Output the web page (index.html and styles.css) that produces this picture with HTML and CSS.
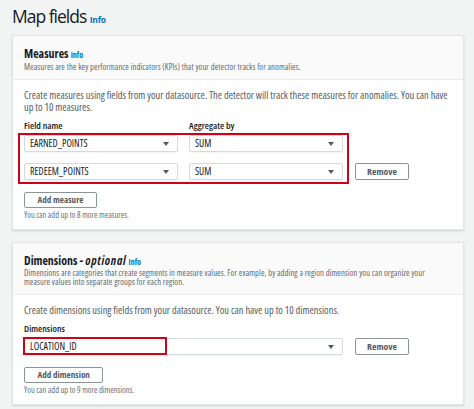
FILE: index.html
```html
<!DOCTYPE html>
<html>
<head>
<meta charset="utf-8">
<link rel="stylesheet" href="styles.css">
</head>
<body>
<div class="page">
  <h1 class="title">Map fields <span class="info">Info</span></h1>

  <section class="card">
    <header class="card-head">
      <h2 class="card-title">Measures <span class="info">Info</span></h2>
      <p class="desc">Measures are the key performance indicators (KPIs) that your detector tracks for anomalies.</p>
    </header>
    <div class="card-body">
      <p class="lead">Create measures using fields from your datasource. The detector will track these measures for anomalies. You can have up to 10 measures.</p>
      <div class="labels">
        <span class="label">Field name</span>
        <span class="label">Aggregate by</span>
      </div>
      <div class="rows">
        <div class="row">
          <div class="select">EARNED_POINTS<svg class="caret" viewBox="0 0 6 4"><path d="M0 0H6L3 4Z"/></svg></div>
          <div class="select">SUM<svg class="caret" viewBox="0 0 6 4"><path d="M0 0H6L3 4Z"/></svg></div>
        </div>
        <div class="row">
          <div class="select">REDEEM_POINTS<svg class="caret" viewBox="0 0 6 4"><path d="M0 0H6L3 4Z"/></svg></div>
          <div class="select">SUM<svg class="caret" viewBox="0 0 6 4"><path d="M0 0H6L3 4Z"/></svg></div>
          <button class="btn">Remove</button>
        </div>
        <div class="highlight hl-measures"></div>
      </div>
      <button class="btn add">Add measure</button>
      <p class="hint">You can add up to 8 more measures.</p>
    </div>
  </section>

  <section class="card">
    <header class="card-head">
      <h2 class="card-title">Dimensions - <em>optional</em> <span class="info">Info</span></h2>
      <p class="desc">Dimensions are categories that create segments in measure values. For example, by adding a region dimension you can organize your measure values into separate groups for each region.</p>
    </header>
    <div class="card-body">
      <p class="lead">Create dimensions using fields from your datasource. You can have up to 10 dimensions.</p>
      <span class="label">Dimensions</span>
      <div class="row dim-row">
        <div class="select wide">LOCATION_ID<svg class="caret" viewBox="0 0 6 4"><path d="M0 0H6L3 4Z"/></svg></div>
        <button class="btn">Remove</button>
        <div class="highlight hl-dim"></div>
      </div>
      <button class="btn add">Add dimension</button>
      <p class="hint">You can add up to 9 more dimensions.</p>
    </div>
  </section>
</div>
</body>
</html>
```

FILE: styles.css
```css
* { box-sizing: border-box; }
body {
  margin: 0;
  background: #f2f3f3;
  font-family: "Open Sans", "Noto Sans", sans-serif;
  font-stretch: 75%;
  color: #16191f;
}
.page {
  padding: 0 10px 0 12px;
}
.title {
  margin: 0 0 2px;
  font-weight: 400;
  font-stretch: 100%;
  font-size: 17.5px;
  line-height: 33px;
  letter-spacing: -1px;
}
.title .info {
  font-size: 8.5px;
  font-stretch: 100%;
  letter-spacing: -0.3px;
}
.info {
  color: #0073bb;
  font-weight: 700;
  font-style: normal;
  font-size: 8px;
  line-height: 1;
  letter-spacing: 0;
}
.card {
  background: #fff;
  border: 1px solid #e4e6e6;
  box-shadow: 0 1px 2px rgba(0, 0, 0, 0.14);
  margin-bottom: 12px;
}
.card-head {
  background: #fafafa;
  border-bottom: 1px solid #eaeded;
  padding: 10px 11px 8px;
}
.card-title {
  margin: 0;
  font-size: 11.9px;
  line-height: 14px;
  font-weight: 700;
}
.card-title em {
  font-weight: 700;
  letter-spacing: 0.7px;
}
.desc {
  margin: 2.5px 0 0;
  font-size: 8.5px;
  line-height: 8.5px;
  letter-spacing: 0.1px;
  color: #5f6870;
}
.card-body {
  padding: 8.5px 11px 9px;
}
.lead {
  margin: 0 0 7.5px;
  font-size: 10.4px;
  line-height: 12px;
  color: #545b64;
}
.label {
  display: block;
  font-size: 9.6px;
  line-height: 11px;
  font-weight: 600;
  color: #16191f;
}
.labels { display: flex; gap: 11px; }
.labels .label { width: 154px; }
.rows {
  position: relative;
  display: flex;
  flex-direction: column;
  gap: 11px;
  margin-top: 3.5px;
}
.row { display: flex; align-items: center; gap: 11px; }
.select {
  position: relative;
  width: 154px;
  height: 17px;
  border: 1px solid #d5dbdb;
  border-radius: 2px;
  background: #fff;
  box-shadow: 0 1px 1px rgba(0, 0, 0, 0.05);
  font-size: 10px;
  line-height: 15px;
  padding-left: 5px;
  color: #16191f;
}
.select.wide { width: 319px; }
.caret {
  position: absolute;
  right: 8px;
  top: 6px;
  width: 6px;
  height: 4px;
  fill: #545b64;
}
.btn {
  font-family: inherit;
  font-stretch: 75%;
  background: #fff;
  border: 1px solid #8d9496;
  border-radius: 2px;
  color: #545b64;
  font-weight: 700;
  font-size: 9.6px;
  height: 17px;
  width: 54px;
  padding: 0;
  margin-left: 1px;
}
.btn.add {
  display: block;
  width: auto;
  height: 16px;
  padding: 0 12.5px;
  margin: 12px 0 0;
  font-size: 9.1px;
  color: #545b64;
}
.hint {
  margin: 2px 0 0;
  font-size: 8.4px;
  line-height: 10px;
  color: #687078;
}
.label + .dim-row { margin-top: 3.5px; }
.highlight {
  position: absolute;
  border: 2px solid #d0021b;
  pointer-events: none;
}
.hl-measures { left: -6px; top: -2px; width: 331px; height: 51px; }
.dim-row { position: relative; }
.hl-dim { left: -1px; top: -1px; width: 144px; height: 18px; }
```
